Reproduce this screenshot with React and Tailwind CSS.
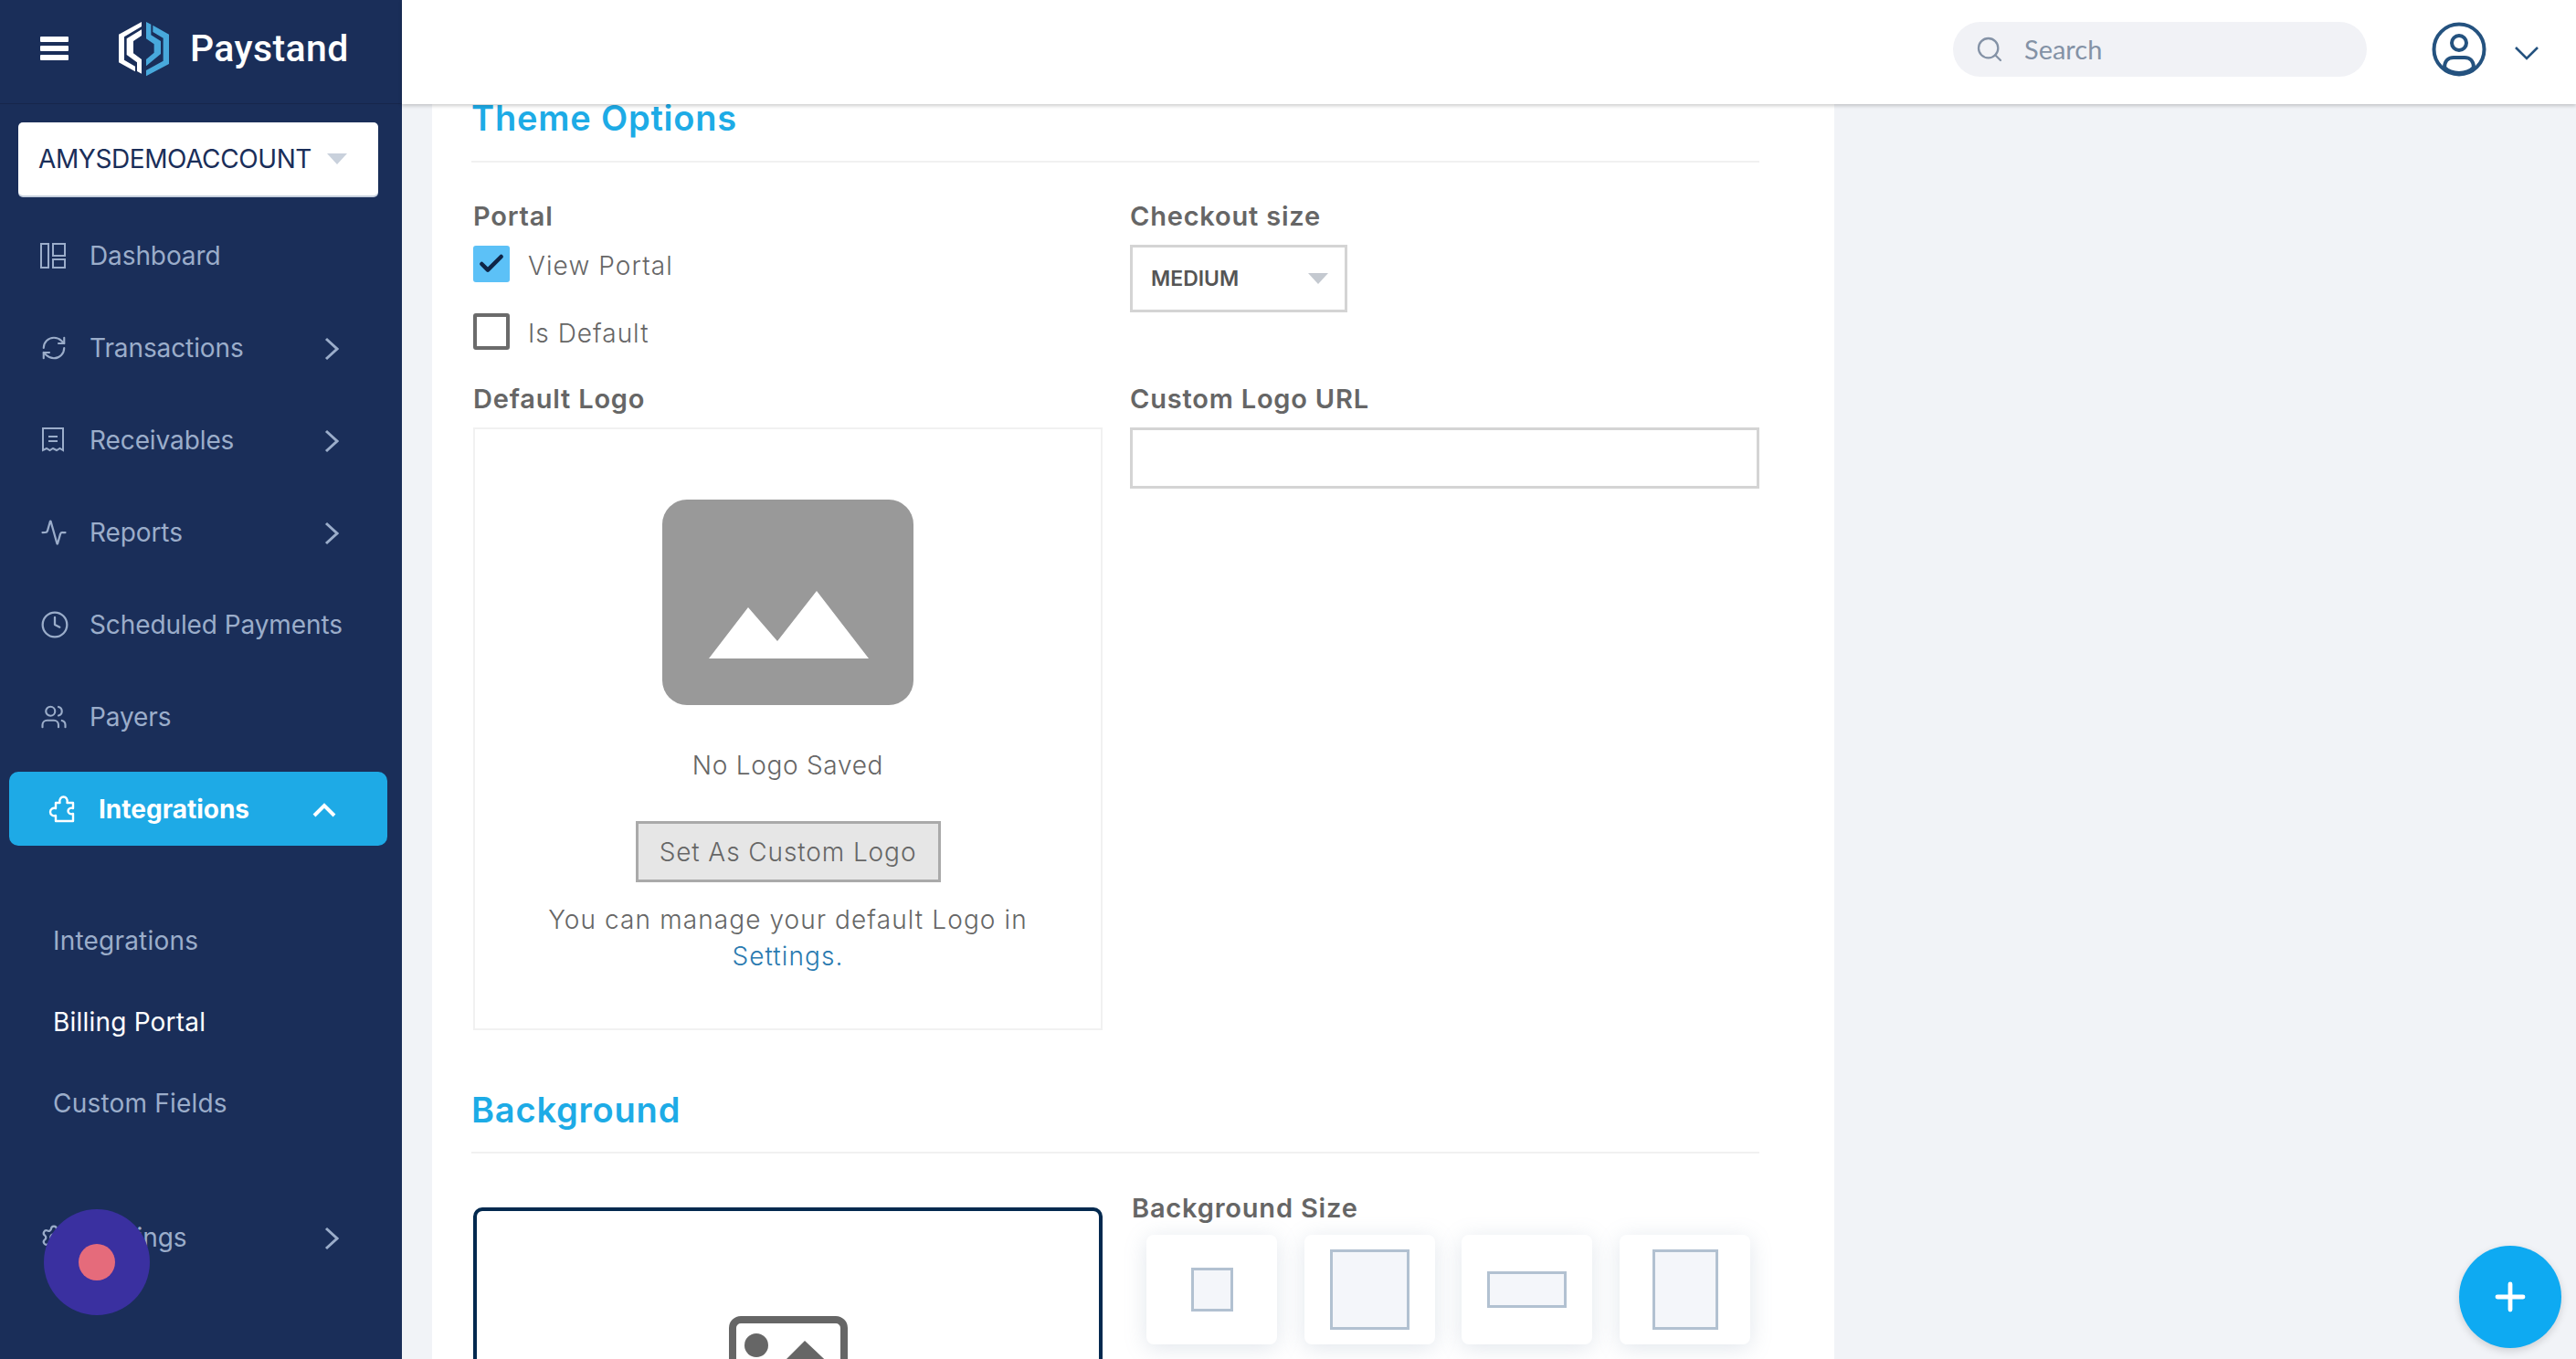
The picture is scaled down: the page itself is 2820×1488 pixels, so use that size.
import React from "react";
import { Activity, Clock, Plus, RefreshCw, Search, Settings, Users, Check } from "lucide-react";

const DashIcon = () => (
  <svg width="28" height="28" viewBox="0 0 28 28" fill="none" stroke="currentColor" strokeWidth="2">
    <rect x="1" y="1" width="8" height="26" />
    <rect x="14" y="1" width="13" height="13" />
    <rect x="14" y="18" width="13" height="9" />
  </svg>
);

const ReceiptIcon = () => (
  <svg width="28" height="28" viewBox="0 0 28 28" fill="none" stroke="currentColor" strokeWidth="2">
    <path d="M3 25V1h22v24l-3.500-2-3.500 2-4-2-3.500 2-3.500-2z" />
    <path d="M9 10h10M9 15h10" />
  </svg>
);

const PuzzleIcon = () => (
  <svg width="32" height="30" viewBox="0 0 32 30" fill="none" stroke="currentColor" strokeWidth="2.4" strokeLinejoin="round">
    <path d="M8 8H12.500C11.500 4 14 1.500 16.500 1.500C19 1.500 21.500 4 20.500 8H27V14C24 13 21.500 14.500 21.500 17C21.500 19.500 24 21 27 20V28H8V22C5 23 2 21 2 18C2 15 5 13 8 14Z" />
  </svg>
);

const ArrowRight = () => (
  <svg width="16" height="26" viewBox="0 0 16 26" fill="none" stroke="currentColor" strokeWidth="3" className="mt-[3px] shrink-0">
    <polyline points="2,2 14,13 2,24" />
  </svg>
);

const Logo = () => (
  <svg width="80" height="75" viewBox="0 0 240 225">
    <g fill="#ffffff">
      <polygon points="105,27 105,42 48,76 48,152 84,173 84,190 30,160 30,68" />
      <polygon points="105,52 105,72 78,90 78,130 105,150 105,197 90,189 90,160 56,135 56,82" />
    </g>
    <g fill="#48a9dc">
      <polygon points="142,38 195,68 195,165 120,205 120,186 176,155 176,80 142,60" />
      <polygon points="120,27 136,35 136,70 168,90 168,132 120,172 120,150 146,128 146,100 120,82" />
    </g>
  </svg>
);

const NavItem = ({ icon, label, arrow }) => (
  <div className="flex h-[101px] items-center pl-[44px] pr-[69px] text-[#9badca]">
    <span className="flex w-[54px] shrink-0 items-center">{icon}</span>
    <span className="flex-1 whitespace-nowrap text-[28px] tracking-[-0.1px]">{label}</span>
    {arrow && <ArrowRight />}
  </div>
);

const SubItem = ({ label, active }) => (
  <div className={`flex h-[89px] items-center pl-[58px] text-[28px] tracking-[0.2px] ${active ? "text-white" : "text-[#9badca]"}`}>
    {label}
  </div>
);

const Label = ({ children }) => (
  <div className="flex h-[40px] items-center text-[29px] font-semibold tracking-[0.8px] text-[#666666]">{children}</div>
);

const Caret = ({ className }) => (
  <span className={`h-0 w-0 border-x-[11px] border-t-[12px] border-x-transparent ${className}`} />
);

const SizeCard = ({ boxClass }) => (
  <div className="flex h-[120px] w-[143px] items-center justify-center rounded-lg bg-white shadow-[0_4px_24px_rgba(120,140,170,0.22)]">
    <div className={`border-[3px] border-[#b2c1d1] bg-[#f4f6fa] ${boxClass}`} />
  </div>
);

const SectionTitle = ({ children }) => (
  <h2 className="h-[28px] text-[38px] font-semibold leading-[28px] tracking-[0.8px] text-[#1dabe6]">{children}</h2>
);

export default function App() {
  return (
    <div className="relative flex h-[1488px] w-[2820px] overflow-hidden bg-[#f1f3f7] font-[Inter,sans-serif]">
      <aside className="flex h-full w-[440px] shrink-0 flex-col bg-[#1a2e59]">
        <div className="flex h-[114px] shrink-0 items-center border-b border-[#16264b] pb-[8px] pl-[44px]">
          <div className="flex w-[31px] flex-col gap-[4px]">
            <span className="h-[6px] rounded-[1px] bg-white" />
            <span className="h-[6px] rounded-[1px] bg-white" />
            <span className="h-[6px] rounded-[1px] bg-white" />
          </div>
          <span className="ml-[45px] flex items-center"><Logo /></span>
          <span className="ml-[8px] mt-[2px] font-[Roboto,sans-serif] text-[41px] font-medium tracking-[0.4px] text-white">Paystand</span>
        </div>
        <div className="ml-[20px] mr-[26px] mt-[20px] flex h-[80px] shrink-0 items-center justify-between rounded-[5px] bg-white pl-[22px] pr-[34px] shadow-[0_2px_0_#c6d0de]">
          <span className="text-[28px] tracking-[-0.4px] text-[#1a2e59]">AMYSDEMOACCOUNT</span>
          <Caret className="border-t-[#c9d1dc]" />
        </div>
        <nav className="mt-[15px] flex flex-col">
          <NavItem icon={<DashIcon />} label="Dashboard" />
          <NavItem icon={<RefreshCw size={30} strokeWidth={1.7} />} label="Transactions" arrow />
          <NavItem icon={<ReceiptIcon />} label="Receivables" arrow />
          <NavItem icon={<Activity size={30} strokeWidth={1.8} />} label="Reports" arrow />
          <NavItem icon={<Clock size={32} strokeWidth={1.7} />} label="Scheduled Payments" />
          <NavItem icon={<Users size={30} strokeWidth={1.7} />} label="Payers" />
        </nav>
        <div className="ml-[10px] mr-[16px] mt-[10px] flex h-[81px] shrink-0 items-center rounded-[10px] bg-[#1eaae6] pl-[43px] pr-[56px] text-white">
          <PuzzleIcon />
          <span className="ml-[23px] flex-1 text-[28px] font-bold">Integrations</span>
          <svg width="26" height="16" viewBox="0 0 26 16" fill="none" stroke="currentColor" strokeWidth="4" className="mt-[2px]">
            <polyline points="2,14 13,3 24,14" />
          </svg>
        </div>
        <div className="mt-[59px] flex flex-col">
          <SubItem label="Integrations" />
          <SubItem label="Billing Portal" active />
          <SubItem label="Custom Fields" />
        </div>
        <div className="mt-[52px]">
          <NavItem icon={<Settings size={30} strokeWidth={1.8} />} label="Settings" arrow />
        </div>
      </aside>

      <div className="flex h-full min-w-0 flex-1 flex-col">
        <header className="relative z-10 flex h-[114px] shrink-0 items-center bg-white pb-[6px] pl-[1698px] shadow-[0_2px_4px_rgba(0,0,0,0.2)]">
          <div className="flex h-[60px] w-[453px] items-center rounded-full bg-[#f1f2f6] pl-[24px] text-[#8492a6]">
            <Search size={32} strokeWidth={1.7} />
            <span className="ml-[22px] font-[Lato,sans-serif] text-[29px]">Search</span>
          </div>
          <svg className="ml-[71px]" width="60" height="60" viewBox="0 0 60 60" fill="none" stroke="#24527f" strokeWidth="4">
            <circle cx="30" cy="30" r="27.500" />
            <circle cx="30" cy="23" r="8" />
            <path d="M14 50c0-8 5-11 10-11h12c5 0 10 3 10 11" />
            <path d="M14 50c8 8 24 8 32 0" />
          </svg>
          <svg className="ml-[31px] mt-[8px]" width="26" height="15" viewBox="0 0 26 15" fill="none" stroke="#24527f" strokeWidth="2.600">
            <polyline points="1,1 13,13 25,1" />
          </svg>
        </header>

        <div className="min-h-0 flex-1">
          <main className="ml-[33px] w-[1535px] bg-white pl-[43px] pr-[82px] pt-[1px]">
            <SectionTitle>Theme Options</SectionTitle>
            <div className="mt-[33px] h-[2px] bg-[#f1f1f1]" />
            <div className="mt-[39px] flex gap-[30px] pl-[2px]">
              <div className="w-[689px]">
                <Label>Portal</Label>
                <div className="mt-[12px] flex h-[40px] items-center gap-[20px]">
                  <span className="flex h-[40px] w-[40px] items-center justify-center rounded-[3px] bg-[#5cc1f7]">
                    <Check size={32} strokeWidth={3.4} color="#0f2547" />
                  </span>
                  <span className="pt-[3px] text-[28px] font-light tracking-[1.1px] text-[#666666]">View Portal</span>
                </div>
                <div className="mt-[34px] flex h-[40px] items-center gap-[20px]">
                  <span className="h-[40px] w-[40px] rounded-[3px] border-[4px] border-[#6b6b6b]" />
                  <span className="pt-[3px] text-[28px] font-light tracking-[1px] text-[#666666]">Is Default</span>
                </div>
              </div>
              <div className="w-[689px]">
                <Label>Checkout size</Label>
                <div className="mt-[11px] flex h-[74px] w-[238px] items-center justify-between border-[3px] border-[#d4d4d4] pl-[20px] pr-[18px]">
                  <span className="text-[23px] font-semibold text-[#555555]">MEDIUM</span>
                  <Caret className="border-t-[#c4c9d0]" />
                </div>
              </div>
            </div>
            <div className="mt-[34px] flex gap-[30px] pl-[2px]">
              <div className="w-[689px]">
                <Label>Default Logo</Label>
                <div className="mt-[11px] flex h-[660px] flex-col items-center border-2 border-[#f1f1f1] pt-[77px]">
                  <div className="flex h-[225px] w-[275px] items-center justify-center rounded-[27px] bg-[#999999]">
                    <svg width="175" height="74" viewBox="0 0 175 74" className="ml-[1px] mt-[48px]">
                      <polygon points="0,74 43,18 75,55 118,0 175,74" fill="#ffffff" />
                    </svg>
                  </div>
                  <div className="mt-[46px] flex h-[40px] items-center text-[28px] font-light tracking-[0.7px] text-[#666666]">No Logo Saved</div>
                  <div className="mt-[41px] flex h-[67px] w-[334px] items-center justify-center border-[3px] border-[#aaaaaa] bg-[#e6e6e6] text-[28px] font-light tracking-[0.9px] text-[#666666]">
                    Set As Custom Logo
                  </div>
                  <p className="mt-[21px] text-center text-[28px] font-light leading-[40px] tracking-[1.1px] text-[#666666]">
                    You can manage your default Logo in
                    <br />
                    <span className="text-[#2a7ab0]">Settings.</span>
                  </p>
                </div>
              </div>
              <div className="w-[689px]">
                <Label>Custom Logo URL</Label>
                <div className="mt-[11px] h-[67px] border-[3px] border-[#d4d4d4] bg-white" />
              </div>
            </div>
            <div className="mt-[73px]">
              <SectionTitle>Background</SectionTitle>
            </div>
            <div className="mt-[32px] h-[2px] bg-[#f1f1f1]" />
            <div className="flex h-[225px] gap-[30px] pl-[2px]">
              <div className="mt-[59px] flex h-[400px] w-[689px] justify-center rounded-[10px] border-[4px] border-[#03294f] pt-[115px]">
                <svg width="130" height="100" viewBox="0 0 130 100" fill="none" className="shrink-0">
                  <rect x="4" y="4" width="122" height="92" rx="9" stroke="#666666" strokeWidth="8" />
                  <circle cx="30" cy="32" r="13" fill="#666666" />
                  <polygon points="83,27 118,60 118,88 48,88 48,62" fill="#666666" />
                </svg>
              </div>
              <div className="mt-[40px] w-[689px] pl-[2px]">
                <Label>Background Size</Label>
                <div className="mt-[9px] flex gap-[29.7px] pl-[16px]">
                  <SizeCard boxClass="h-[48px] w-[46px]" />
                  <SizeCard boxClass="h-[88px] w-[87px]" />
                  <SizeCard boxClass="h-[40px] w-[87px]" />
                  <SizeCard boxClass="h-[88px] w-[72px]" />
                </div>
              </div>
            </div>
          </main>
        </div>
      </div>

      <div className="absolute left-[48px] top-[1324px] flex h-[116px] w-[116px] items-center justify-center rounded-full bg-[#3a30a0]">
        <span className="h-[40px] w-[40px] rounded-full bg-[#e56b7b]" />
      </div>
      <div className="absolute left-[2692px] top-[1364px] flex h-[112px] w-[112px] items-center justify-center rounded-full bg-[#0eaaf2] shadow-[0_3px_8px_rgba(0,0,0,0.15)]">
        <Plus size={48} strokeWidth={2.4} color="#ffffff" />
      </div>
    </div>
  );
}
